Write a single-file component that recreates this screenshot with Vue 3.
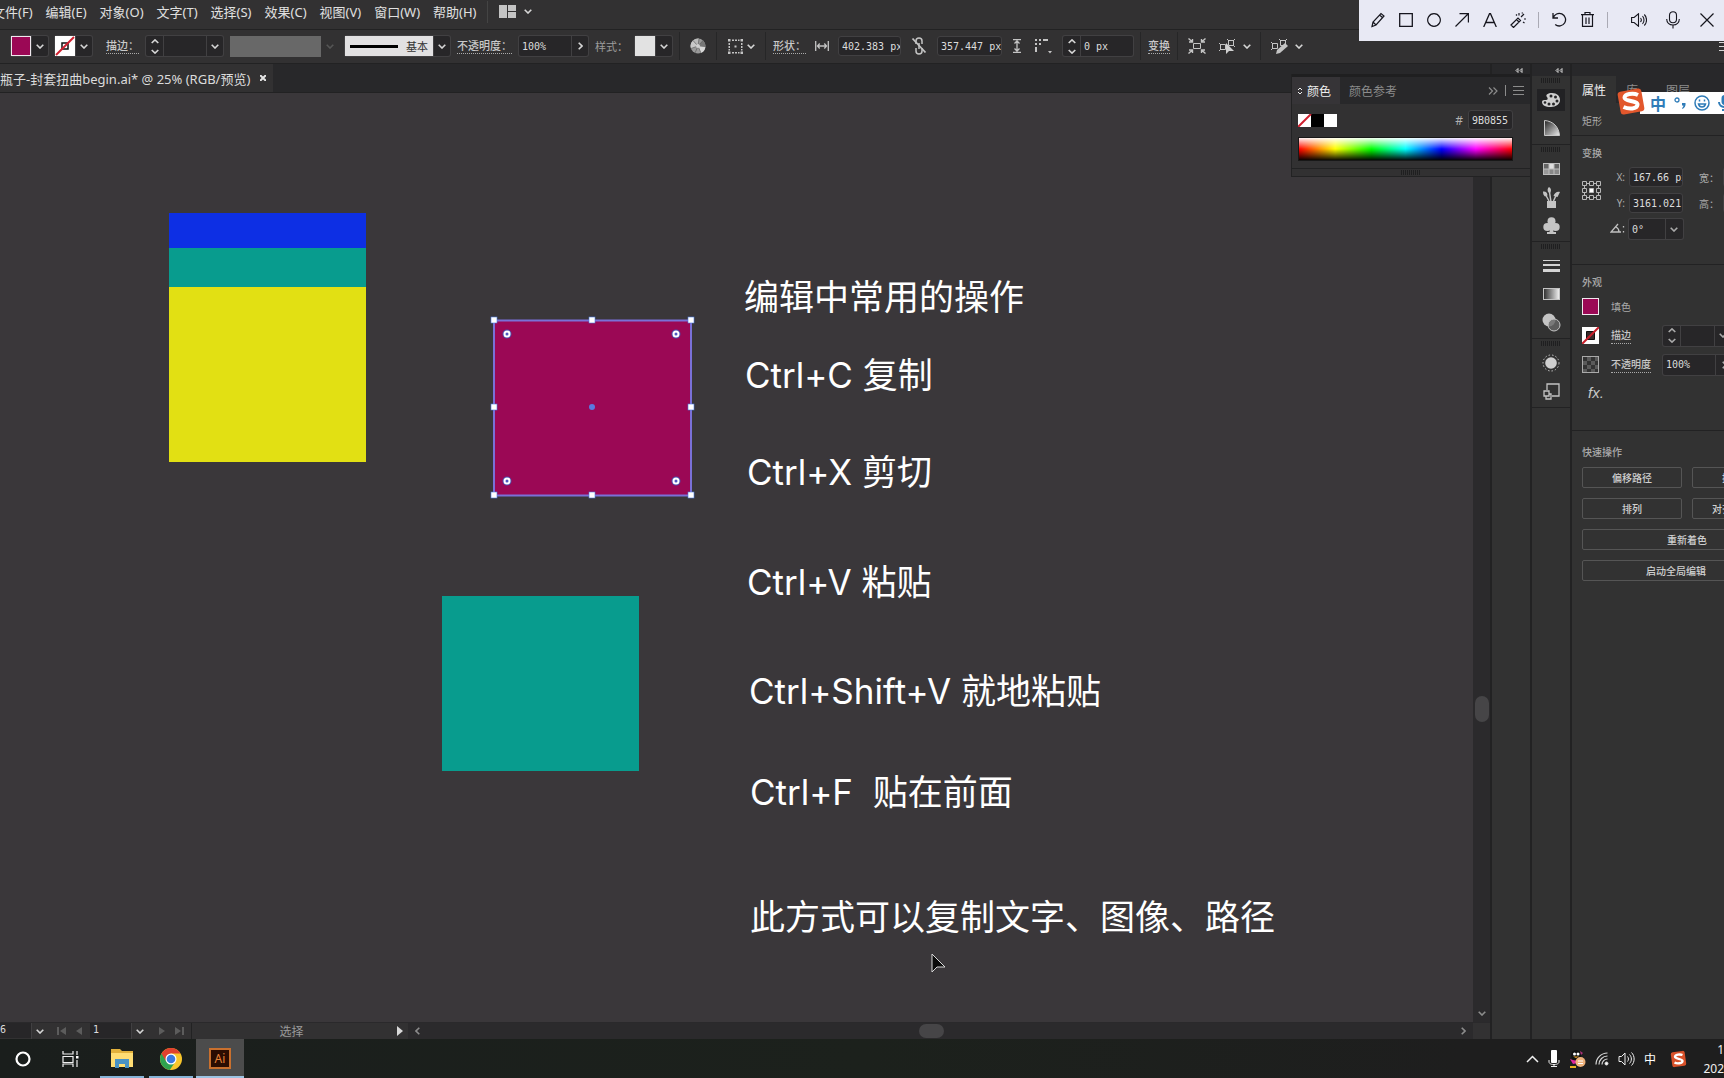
<template>
  <div class="app">
    <!-- Menu bar -->
    <header class="menu-bar">
      <nav class="menus">
        <button v-for="menu in menus" :key="menu" class="menu">{{ menu }}</button>
      </nav>
      <span class="menu-sep"></span>
      <button class="layout-btn" aria-label="排列文档">
        <svg width="17" height="13" viewBox="0 0 17 13" fill="#c4c4c4">
          <path d="M0 0h8v13H0zM9 0h8v6H9zM9 7h8v6H9z" />
        </svg>
        <Glyph name="down" />
      </button>
    </header>

    <!-- Control bar -->
    <section class="control-bar">
      <div class="combo">
        <span class="swatch fill"></span>
        <button class="arrow" aria-label="填色"><Glyph name="down" /></button>
      </div>
      <div class="combo">
        <svg class="swatch" width="20" height="20" viewBox="0 0 20 20">
          <path fill="#fff" d="M0 0h20v20H0z" />
          <path d="M7 7h6v6H7z" fill="none" stroke="#111" stroke-width="1.5" />
          <path d="M1 19L19 1" stroke="#d02030" stroke-width="2" />
        </svg>
        <button class="arrow" aria-label="描边颜色"><Glyph name="down" /></button>
      </div>
      <label class="link more" for="stroke-w">描边：</label>
      <div class="combo">
        <button class="spin" aria-label="调整描边"><Glyph name="spin" /></button>
        <input id="stroke-w" v-model="strokeWidth" class="w42" />
        <button class="arrow" aria-label="描边粗细"><Glyph name="down" /></button>
      </div>
      <div class="combo off">
        <span class="width-profile"></span>
        <button class="arrow" aria-label="变量宽度" disabled><Glyph name="down" /></button>
      </div>
      <div class="combo">
        <span class="brush"><i></i>基本</span>
        <button class="arrow" aria-label="画笔"><Glyph name="down" /></button>
      </div>
      <label class="link" for="opacity">不透明度：</label>
      <div class="combo">
        <input id="opacity" v-model="opacity" class="w52" />
        <button class="arrow" aria-label="不透明度滑块"><Glyph name="right" /></button>
      </div>
      <span class="plain">样式：</span>
      <div class="combo">
        <span class="swatch style"></span>
        <button class="arrow" aria-label="图形样式"><Glyph name="down" /></button>
      </div>
      <span class="sep"></span>
      <button class="cell c22" aria-label="重新着色图稿">
        <svg width="16" height="16" viewBox="0 0 16 16">
          <circle cx="8" cy="8" r="7.500" fill="#9a9a9a" />
          <path d="M8 8L3 2.500A7.500 7.500 0 0 1 9 .6z" fill="#bcbcbc" />
          <path d="M8 8l7.400 1A7.500 7.500 0 0 1 11 15z" fill="#d8d8d8" />
          <path d="M8 8L1 10.500A7.500 7.500 0 0 1 3 2.500z" fill="#c8c8c8" />
          <path d="M8 8l5-5.500a7.500 7.500 0 0 1 2.400 6.500z" fill="#777" />
          <path d="M8 8L5 15M8 8l3 7M8 8L1 10.500M8 8L3 2.500M8 8l1-7.400M8 8l5-5.500" stroke="#555" stroke-width=".6" />
          <circle cx="8" cy="8" r="2" fill="#d0d0d0" />
        </svg>
      </button>
      <span class="sep"></span>
      <button class="cell c34" aria-label="对齐">
        <svg width="15" height="15" viewBox="0 0 15 15" fill="#c4c4c4">
          <path d="M0 0h2.500v2.500H0zM12.500 0H15v2.500h-2.500zM0 12.500h2.500V15H0zM12.500 12.500H15V15h-2.500zM6.500 6.500h2v2h-2z" />
          <path d="M4 .5h2v1.500H4zM7 .5h2v1.500H7zM10 .5h1.500v1.500H10zM4 13h2v1.500H4zM7 13h2v1.500H7zM10 13h1.500v1.500H10zM.5 4H2v2H.5zM.5 7H2v2H.5zM.5 10H2v1.500H.5zM13 4h1.500v2H13zM13 7h1.500v2H13zM13 10h1.500v1.500H13z" />
        </svg>
        <Glyph name="down" />
      </button>
      <span class="sep"></span>
      <label class="link" for="shape-w">形状：</label>
      <span class="cell c18">
        <svg width="14" height="10" viewBox="0 0 14 10" fill="none" stroke="#c4c4c4" stroke-width="1.300">
          <path d="M.7 0v10M13.300 0v10M2.500 5h9M4.700 2.500L2.500 5l2.200 2.500M9.300 2.500L11.500 5 9.300 7.500" />
        </svg>
      </span>
      <input id="shape-w" v-model="shapeW" class="box w63" />
      <button class="cell c22" aria-label="约束宽度和高度比例">
        <svg width="16" height="18" viewBox="0 0 16 18" fill="none" stroke="#c4c4c4" stroke-width="1.500">
          <path d="M5 7V4a3 3 0 0 1 6 0v3M5 11v3a3 3 0 0 0 6 0v-3M8 6v6" />
          <path d="M1.500 1.500l13 14" stroke-width="1.800" />
        </svg>
      </button>
      <input v-model="shapeH" class="box w65" aria-label="形状高度" />
      <span class="cell c15">
        <svg width="10" height="14" viewBox="0 0 10 14" fill="none" stroke="#c4c4c4">
          <path d="M1 .5h8M1 13.500h8M5 2v10M2.500 4.500L5 2l2.500 2.500M2.500 9.500L5 12l2.500-2.500" stroke-width="1.300" />
        </svg>
      </span>
      <button class="cell c25" aria-label="边角类型">
        <svg width="17" height="15" viewBox="0 0 17 15" fill="#c4c4c4">
          <path d="M0 0h2v2H0zM4 0h2v2H4zM8 0h5v2H8zM0 4h2v2H0zM4 4h2v2H4zM0 8h2v5H0zM13 12h4l-2 2.500z" />
        </svg>
      </button>
      <div class="combo">
        <button class="spin" aria-label="调整圆角"><Glyph name="spin" /></button>
        <input v-model="radius" class="w52" aria-label="圆角半径" />
      </div>
      <span class="sep"></span>
      <a class="link" href="#">变换</a>
      <span class="sep"></span>
      <button class="cell c24" aria-label="隔离选中的对象">
        <svg width="18" height="16" viewBox="0 0 18 16" fill="none" stroke="#c4c4c4">
          <path d="M5.500 5.500h7v5h-7z" />
          <path d="M.5.5l4 3.500M4.500 1v3H1M17.500.5l-4 3.500M13.500 1v3H17M.5 15.500l4-3.500M4.500 15v-3H1M17.500 15.500l-4-3.500M13.500 15v-3H17" stroke-width="1.400" />
        </svg>
      </button>
      <button class="cell c37" aria-label="选择类似的对象">
        <svg width="18" height="17" viewBox="0 0 18 17">
          <path d="M1.500 6.500h5v5h-5zM9.500 2.500h5v5h-5zM0 5l2 2M0 13l2-2M8 1l2 2M16 1l-2 2M16 9l-2-2" fill="none" stroke="#c4c4c4" />
          <path d="M7 5v11l3-3h5z" fill="#d0d0d0" />
        </svg>
        <Glyph name="down" />
      </button>
      <span class="sep"></span>
      <button class="cell c37" aria-label="编辑类似的形状">
        <svg width="18" height="17" viewBox="0 0 18 17">
          <path d="M1.500 5.500h5v5h-5zM9.500 2.500h5v5h-5zM0 4l2 2M0 12l2-2M8 1l2 2M16 1l-2 2" fill="none" stroke="#c4c4c4" />
          <path d="M5 16l1-4 8-7 3 3-8 7z" fill="#c4c4c4" />
        </svg>
        <Glyph name="down" />
      </button>
      <button class="bar-menu" aria-label="控制栏菜单"><Glyph name="menu" /></button>
    </section>

    <main class="workspace">
      <!-- Document -->
      <section class="doc">
        <div class="doc-tabs">
          <div class="doc-tab">
            <span>瓶子-封套扭曲begin.ai* @ 25% (RGB/预览)</span>
            <button aria-label="关闭"><svg width="6" height="6" viewBox="0 0 6 6" stroke="#e4e4e4" stroke-width="2"><path d="M0 0l6 6M6 0L0 6" /></svg></button>
          </div>
        </div>
        <div class="doc-view">
          <div class="canvas">
            <div v-for="(s, i) in shapes" :key="i" class="shape" :style="box(s)"></div>
            <svg class="selection" width="206" height="184" viewBox="0 0 206 184">
              <path d="M5 4.500h197v175H5z" fill="#9b0855" stroke="#7a70d8" stroke-width="2" />
              <g fill="#fff" stroke="#4c7ce0">
                <rect v-for="(p, i) in handles" :key="i" :x="p[0] - 3" :y="p[1] - 3" width="6" height="6" stroke-width=".6" />
              </g>
              <g v-for="(c, i) in corners" :key="'c' + i">
                <circle :cx="c[0]" :cy="c[1]" r="3" fill="#9b0855" stroke="#4a4fae" stroke-width="3" />
                <circle :cx="c[0]" :cy="c[1]" r="2.500" fill="#4b58c0" stroke="#fff" stroke-width="2" />
              </g>
              <circle cx="103" cy="91" r="3" fill="#5a78e0" />
            </svg>
            <p v-for="n in notes" :key="n.text" class="note" :style="{ left: n.x + 'px', top: n.y + 'px' }">{{ n.text }}</p>
            <svg class="cursor" width="15" height="21" viewBox="0 0 15 21">
              <path d="M1 1v18l5-5h8z" fill="#0a0a0a" stroke="#d8d8d8" />
            </svg>
          </div>
          <div class="v-scroll">
            <span class="v-thumb"></span>
            <Glyph name="down" />
          </div>
        </div>
        <footer class="status">
          <div class="zoom">
            <input v-model="zoomText" aria-label="缩放" />
            <button class="arrow" aria-label="缩放级别"><Glyph name="down" /></button>
          </div>
          <button class="nav" aria-label="首项"><svg width="10" height="8" viewBox="0 0 10 8" fill="#5c5c5c"><path d="M0 0h2v8H0zM9 0v8L3 4z" /></svg></button>
          <button class="nav" aria-label="上一项"><svg width="6" height="8" viewBox="0 0 6 8" fill="#5c5c5c"><path d="M6 0v8L0 4z" /></svg></button>
          <div class="artboard">
            <input v-model="artboard" aria-label="画板" />
            <button class="arrow" aria-label="画板列表"><Glyph name="down" /></button>
          </div>
          <button class="nav" aria-label="下一项"><svg width="6" height="8" viewBox="0 0 6 8" fill="#5c5c5c"><path d="M0 0v8l6-4z" /></svg></button>
          <button class="nav" aria-label="末项"><svg width="10" height="8" viewBox="0 0 10 8" fill="#5c5c5c"><path d="M8 0h2v8H8zM1 0v8l6-4z" /></svg></button>
          <span class="tool-name">选择</span>
          <button class="play" aria-label="状态栏菜单"><svg width="6" height="10" viewBox="0 0 6 10" fill="#d8d8d8"><path d="M0 0v10l6-5z" /></svg></button>
          <div class="h-scroll">
            <Glyph name="left" />
            <span class="h-thumb"></span>
            <Glyph name="right" />
          </div>
          <span class="corner"></span>
        </footer>
      </section>

      <section class="column gutter">
        <div class="column-top"><Glyph name="collapse" /></div>
      </section>

      <!-- Icon dock -->
      <section class="column dock">
        <div class="column-top"><Glyph name="collapse" /></div>
        <div class="dock-group">
          <span class="grip"></span>
          <button class="active" aria-label="颜色">
            <svg width="20" height="16" viewBox="0 0 20 16">
              <path d="M11 1c5 0 8 3 8 7s-4 7-9 7c-6 0-9-2-9-5 0-2 2-2 4-2s2-2 1-3c-2-2 1-4 5-4z" fill="#d0d0d0" />
              <g fill="#262628"><circle cx="10" cy="4" r="1.500" /><circle cx="14.500" cy="5" r="1.500" /><circle cx="16" cy="9" r="1.500" /><circle cx="12.500" cy="12" r="1.500" /><circle cx="8" cy="12" r="1.500" /><circle cx="4" cy="10.500" r="1.300" /></g>
            </svg>
          </button>
          <button aria-label="颜色参考">
            <svg width="17" height="16" viewBox="0 0 17 16">
              <defs><linearGradient id="guide" x2="1" y2="1"><stop stop-color="#222" /><stop offset="1" stop-color="#eee" /></linearGradient></defs>
              <path d="M1.500.5v15h15C16 7 10 1 1.500.5z" fill="url(#guide)" stroke="#c8c8c8" />
            </svg>
          </button>
        </div>
        <div class="dock-group">
          <span class="grip"></span>
          <button aria-label="色板">
            <svg width="17" height="12" viewBox="0 0 17 12">
              <path d="M0 0h17v12H0z" fill="#bdbdbd" />
              <path d="M1 1h4.500v4.500H1zM11.500 1H16v4.500h-4.500z" fill="#666" /><path d="M6.500 1h4v4.500h-4z" fill="#e0e0e0" /><path d="M1 6.500h4.500V11H1z" fill="#999" /><path d="M6.500 6.500h4V11h-4zM11.500 6.500H16V11h-4.500z" fill="#888" />
            </svg>
          </button>
          <button aria-label="画笔">
            <svg width="17" height="21" viewBox="0 0 17 21" fill="#c4c4c4">
              <path d="M4 14h9v7H4zM6 0c2 1 2.500 3 1.500 5.500h-2C4 4 4.500 1 6 0zM0 4.500c2.500-.5 4.500 1 4.500 4L2 9.500C.5 8.500 0 6.500 0 4.500zM17 5c-3-1-5.500 1-6.500 4l4 1z" />
              <path d="M6.500 5l1.500 10M3 8.500l3 5.500M13 8.500L10.500 14" stroke="#c4c4c4" stroke-width="1.500" fill="none" />
            </svg>
          </button>
          <button aria-label="符号">
            <svg width="17" height="17" viewBox="0 0 17 17" fill="#c4c4c4">
              <circle cx="8.500" cy="4.300" r="4" /><circle cx="4.300" cy="10" r="4" /><circle cx="12.700" cy="10" r="4" /><path d="M7.500 8h2l1 7H13v2H4v-2h2.500z" />
            </svg>
          </button>
        </div>
        <div class="dock-group">
          <span class="grip"></span>
          <button aria-label="描边">
            <svg width="17" height="13" viewBox="0 0 17 13" fill="#d4d4d4"><path d="M0 0h17v1H0zM0 4h17v2H0zM0 9h17v3H0z" /></svg>
          </button>
          <button aria-label="渐变"><span class="gradient-icon"></span></button>
          <button aria-label="透明度">
            <svg width="19" height="19" viewBox="0 0 19 19">
              <circle cx="7" cy="7" r="6.500" fill="#c4c4c4" /><circle cx="12" cy="12" r="6" fill="#666" fill-opacity=".8" stroke="#c4c4c4" />
            </svg>
          </button>
        </div>
        <div class="dock-group">
          <span class="grip"></span>
          <button aria-label="外观">
            <svg width="18" height="18" viewBox="0 0 18 18">
              <circle cx="9" cy="9" r="5.800" fill="#d0d0d0" /><circle cx="9" cy="9" r="8" fill="none" stroke="#c4c4c4" stroke-dasharray="1.500 2" />
            </svg>
          </button>
          <button aria-label="图形样式">
            <svg width="17" height="17" viewBox="0 0 17 17" fill="none" stroke="#c4c4c4" stroke-width="1.300">
              <path d="M4 7V1h12v12H9M1 8h5v5H1zM3 13v3h5v-5H6" />
            </svg>
          </button>
        </div>
      </section>

      <!-- Properties -->
      <aside class="column props">
        <div class="column-top"></div>
        <div class="prop-tabs">
          <button class="on">属性</button>
          <button>库</button>
          <button>图层</button>
        </div>
        <div class="prop-type">矩形</div>
        <section class="transform">
          <h3>变换</h3>
          <div class="transform-grid">
            <svg class="ref-point" width="19" height="19" viewBox="0 0 19 19" fill="none" stroke="#b8b8b8">
              <path d="M.5.5h4v4h-4zM7.500.5h4v4h-4zM14.500.5h4v4h-4zM.5 7.500h4v4h-4zM14.500 7.500h4v4h-4zM.5 14.500h4v4h-4zM7.500 14.500h4v4h-4zM14.500 14.500h4v4h-4zM5 2.500h2M12 2.500h2M5 16.500h2M12 16.500h2M2.500 5v2M2.500 12v2M16.500 5v2M16.500 12v2" />
              <path d="M7.500 7.500h4v4h-4z" fill="#fff" />
            </svg>
            <div class="coords">
              <label for="px">X:</label><input id="px" v-model="posX" class="box" />
              <label for="pw">宽：</label><input id="pw" v-model="shapeW" class="box" />
              <label for="py">Y:</label><input id="py" v-model="posY" class="box" />
              <label for="ph">高：</label><input id="ph" v-model="shapeH" class="box" />
              <label for="pa" aria-label="旋转">
                <svg width="15" height="10" viewBox="0 0 15 10" fill="none" stroke="#c0c0c0"><path d="M11 9H1l7-8M6 4c2 1 3 3 3 5M13.500 3v1.500M13.500 8v1.500" stroke-width="1.300" /></svg>
              </label>
              <div class="combo">
                <input id="pa" v-model="angle" class="w36" />
                <button class="arrow" aria-label="旋转角度"><Glyph name="down" /></button>
              </div>
            </div>
          </div>
        </section>
        <section class="appearance">
          <h3>外观</h3>
          <div class="look-rows">
            <div class="look-row">
              <span class="chip fill"></span><span>填色</span>
            </div>
            <div class="look-row">
              <svg width="17" height="17" viewBox="0 0 17 17">
                <path fill="#fff" d="M0 0h17v17H0z" /><path d="M4.500 4.500h8v8h-8z" fill="#3a2a2a" stroke="#111" /><path d="M0 17L17 0" stroke="#c8202c" stroke-width="2" />
              </svg>
              <label class="link" for="st">描边</label>
              <div class="combo">
                <button class="spin" aria-label="调整描边粗细"><Glyph name="spin" /></button>
                <input id="st" v-model="strokeWidth" class="w33" />
                <button class="arrow" aria-label="粗细"><Glyph name="down" /></button>
              </div>
            </div>
            <div class="look-row">
              <span class="chip checker"></span>
              <label class="link" for="op">不透明度</label>
              <div class="combo">
                <input id="op" v-model="opacity" class="w52" />
                <button class="arrow" aria-label="滑块"><Glyph name="right" /></button>
              </div>
            </div>
          </div>
          <button class="fx">fx.</button>
        </section>
        <section class="quick">
          <h3>快速操作</h3>
          <div class="quick-grid">
            <button>偏移路径</button>
            <button>扩展形状</button>
            <button>排列</button>
            <button>对齐像素网格</button>
            <button class="wide">重新着色</button>
            <button class="wide split">启动全局编辑</button>
          </div>
        </section>
      </aside>

      <!-- Floating color panel -->
      <section class="color-panel">
        <div class="color-tabs">
          <button class="on"><Glyph name="updown" />颜色</button>
          <button>颜色参考</button>
          <span class="color-tools"><Glyph name="expand" /><i></i><Glyph name="menu" /></span>
        </div>
        <div class="color-row">
          <svg width="39" height="13" viewBox="0 0 39 13"><path d="M0 0h13v13H0zM26 0h13v13H26z" fill="#fff" /><path d="M13 0h13v13H13z" fill="#000" /><path d="M0 13L13 0" stroke="#d02030" stroke-width="2" /></svg>
          <label for="hex">#</label>
          <input id="hex" v-model="hex" class="box" />
        </div>
        <div class="spectrum"></div>
        <div class="panel-foot"><span class="grip"></span></div>
      </section>
    </main>

    <!-- Taskbar -->
    <footer class="taskbar">
      <button class="task first" aria-label="Cortana"><svg width="16" height="16" viewBox="0 0 16 16"><circle cx="8" cy="8" r="6.500" fill="none" stroke="#fff" stroke-width="2.200" /></svg></button>
      <button class="task" aria-label="任务视图">
        <svg width="17" height="16" viewBox="0 0 17 16" fill="none" stroke="#f0f0f0" stroke-width="1.200"><path d="M1 0v3h10V0M1 5.500h10v6H1zM1 16v-3h10v3M15 0v4M15 9v7" /><path d="M14 5h2.500v2.500H14z" fill="#fff" stroke="none" /></svg>
      </button>
      <div class="running">
        <button class="task open" aria-label="文件资源管理器">
          <svg width="22" height="19" viewBox="0 0 22 19"><path d="M0 0h9l2 2h11v16H0z" fill="#e2b13c" /><path d="M0 4h22v14H0z" fill="#ffdd73" /><path d="M4 10h14v9h-4v-4H8v4H4z" fill="#4a93c4" /></svg>
        </button>
        <button class="task open" aria-label="Chrome">
          <svg width="22" height="22" viewBox="0 0 22 22">
            <circle cx="11" cy="11" r="11" fill="#f8c62c" />
            <path d="M1.500 5.500a11 11 0 0 0 8.300 16.400L15.500 13.500 11 11z" fill="#2fa24f" />
            <path d="M11 5.500h9.500a11 11 0 0 0-19 0l4.700 8z" fill="#e0402f" />
            <circle cx="11" cy="11" r="5.500" fill="#fff" /><circle cx="11" cy="11" r="4.300" fill="#3b78e0" />
          </svg>
        </button>
        <button class="task open current"><span class="ai">Ai</span></button>
      </div>
      <div class="tray">
        <svg width="13" height="8" viewBox="0 0 13 8" fill="none" stroke="#f0f0f0" stroke-width="1.500"><path d="M1 7l5.500-5.500L12 7" /></svg>
        <svg width="12" height="17" viewBox="0 0 12 17"><rect x="3" width="6" height="13" rx="1" fill="#fff" /><path d="M1 10v2c0 1 1 2.500 5 2.500s5-1.500 5-2.500v-2M6 14v2.500M3 16.500h6" fill="none" stroke="#eee" /></svg>
        <svg width="17" height="18" viewBox="0 0 17 18">
          <ellipse cx="7" cy="5.500" rx="5" ry="5.500" fill="#111" /><circle cx="5.500" cy="4" r="1.500" fill="#fff" /><circle cx="9" cy="4" r="1.500" fill="#fff" />
          <path d="M1 9c4 2 8 2 11-1l1 4-9 2z" fill="#e0259c" /><path d="M11 1l3 2-2 2z" fill="#b0307c" />
          <circle cx="11.500" cy="12" r="5" fill="#efb27c" /><path d="M9 11h5M9 13.500h5" stroke="#fff" /><path d="M1 16h6v2H1z" fill="#e8b020" /><path d="M4 6.500h6l-3 1.500z" fill="#e8a020" />
        </svg>
        <svg width="14" height="14" viewBox="0 0 14 14" fill="none" stroke="#d8d8d8"><path d="M1 12.500A11.500 11.500 0 0 1 12.500 1M4 12.500A8.500 8.500 0 0 1 12.500 4M7 12.500A5.500 5.500 0 0 1 12.500 7" stroke-width="1.200" /><circle cx="11.500" cy="11.500" r="1.500" fill="#fff" /></svg>
        <svg width="17" height="14" viewBox="0 0 17 14" fill="none" stroke="#f0f0f0"><path d="M1 4.500h2.500L7 1v12L3.500 9.500H1zM9.500 4.500c1.300 1.500 1.300 3.500 0 5M11.500 2.500c2.500 2.500 2.500 6.500 0 9M13.500.5c3.500 3.500 3.500 9.500 0 13" /></svg>
        <span class="ime">中</span>
        <svg width="17" height="18" viewBox="0 0 17 18"><rect x="1.500" y="1.500" width="14" height="15" rx="2" fill="#d8512a" transform="rotate(-8 8.500 9)" /><path d="M12.500 5C10 4 5 4.500 5 6.800S12.500 8.500 12.500 11 7 14 4.500 12.500" fill="none" stroke="#fff" stroke-width="2.400" /></svg>
      </div>
      <div class="clock"><span>1</span><span>202</span></div>
    </footer>

    <!-- Annotation toolbar -->
    <div class="annotate">
      <button v-for="t in markTools" :key="t" :aria-label="t"><Glyph :name="t" /></button>
      <span class="rule"></span>
      <button v-for="t in editTools" :key="t" :aria-label="t"><Glyph :name="t" /></button>
      <div class="annotate-end">
        <button v-for="t in mediaTools" :key="t" :aria-label="t"><Glyph :name="t" /></button>
      </div>
    </div>

    <!-- IME bar -->
    <div class="sogou">
      <svg class="sogou-logo" width="30" height="29" viewBox="0 0 30 29">
        <rect x="3" y="3" width="24" height="23" rx="3" fill="#e2572c" transform="rotate(-10 15 14.500)" />
        <path d="M22 8C17 5.500 8.500 7 8.500 10.800S22 13.500 21.500 17.800 13 22.500 7.500 20" fill="none" stroke="#fff" stroke-width="4" />
      </svg>
      <button class="zh">中</button>
      <svg width="12" height="14" viewBox="0 0 12 14"><circle cx="3" cy="4" r="2" fill="none" stroke="#2f7cb8" stroke-width="1.300" /><path d="M8 7h3.500c.5 3-1 5-3 6l-.5-1c1-.7 1.500-1.500 1.300-2.500H8z" fill="#2f7cb8" /></svg>
      <svg width="16" height="16" viewBox="0 0 16 16" fill="none" stroke="#2f7cb8" stroke-width="1.500"><circle cx="8" cy="8" r="7" /><path d="M4.500 9c1 4 6 4 7 0zM5.500 4.500v2M10.500 4.500v2" /></svg>
      <svg width="14" height="16" viewBox="0 0 14 16" fill="none" stroke="#2f7cb8" stroke-width="2"><rect x="4.500" y="1" width="5" height="8" rx="2.500" fill="#2f7cb8" /><path d="M1 7c0 3 2.500 5 6 5s6-2 6-5M7 12v3M4 15h6" /></svg>
    </div>
  </div>
</template>

<script setup>
import { ref, h } from 'vue'

// [width, height, path, stroke width]
const glyphs = {
  down: [8, 5, 'M.7.7L4 4 7.300.7', 1.6],
  right: [5, 8, 'M.7.7L4 4 .7 7.300', 1.6],
  left: [5, 8, 'M4.300.7L1 4l3.300 3.300', 1.6],
  spin: [8, 15, 'M.7 4L4 .9 7.300 4M.7 11L4 14.100 7.300 11', 1.6],
  updown: [6, 8, 'M1 3l2-2 2 2M1 5l2 2 2-2', 1],
  expand: [10, 8, 'M1 .5L4.500 4 1 7.500M5.500.5L9 4 5.500 7.500', 1.2],
  collapse: [8, 5, 'M3 .5L1 2.500l2 2zM7 .5l-2 2 2 2z', 1],
  menu: [11, 9, 'M0 .5h11M0 4.500h11M0 8.500h11', 1],
  pencil: [14, 16, 'M1 14.500l1-4.500L10 1.500l3 2.500-8 9zM2 10l3 3M8.500 3l3 2.500', 1.2],
  square: [14, 14, 'M.7.7h12.600v12.600H.7z', 1.3],
  circle: [14, 14, 'M7 .7a6.300 6.300 0 1 0 .01 0z', 1.2],
  arrow: [14, 14, 'M.5 13.500l13-13M4.500.6h8.900v8.900', 1.2],
  text: [14, 14, 'M.7 14L6.500.7h1L13.300 14M3 9.500h8', 1.3],
  wand: [16, 16, 'M1 13l7-7 2.500 2.500-7 7zM6.500 7.500L9 10M9 1v2.500M14 7h2M11 5l3-3M13 10l1.500 1M6 2.500l1 1M12 .5l.5 1', 1.2],
  undo: [15, 15, 'M1 1v5h5M1.200 6a6.300 6.300 0 1 1 2 6.500', 1.3],
  trash: [13, 15, 'M0 2.700h13M4 2.500v-2h5v2M1.500 3v11.300h10V3M5 5.500v6.500M8 5.500v6.500', 1.2],
  sound: [16, 14, 'M.6 4.500h2.500L7.500.8v12.400L3.100 9.500H.6zM9.500 5c1 1.200 1 2.800 0 4M11.500 3.200c2 2 2 5.600 0 7.600M13.300 1.500c3 3 3 8 0 11', 1.1],
  mic: [14, 18, 'M7 .7a3.500 3.500 0 0 0-3.500 3.500v4a3.500 3.500 0 0 0 7 0v-4A3.500 3.500 0 0 0 7 .7zM.7 8c0 3.500 2.500 6 6.300 6s6.300-2.500 6.300-6M7 14v3.500', 1.1],
  close: [14, 14, 'M.5.5l13 13M13.500.5l-13 13', 1.2],
}

const Glyph = ({ name }) => {
  const [w, ht, d, sw] = glyphs[name]
  return h('svg', { width: w, height: ht, viewBox: `0 0 ${w} ${ht}`, fill: 'none', stroke: 'currentColor', 'stroke-width': sw }, [h('path', { d })])
}

const menus = ['文件(F)', '编辑(E)', '对象(O)', '文字(T)', '选择(S)', '效果(C)', '视图(V)', '窗口(W)', '帮助(H)']
const markTools = ['pencil', 'square', 'circle', 'arrow', 'text', 'wand']
const editTools = ['undo', 'trash']
const mediaTools = ['sound', 'mic', 'close']

const strokeWidth = ref('')
const opacity = ref('100%')
const shapeW = ref('402.383 px')
const shapeH = ref('357.447 px')
const radius = ref('0 px')
const posX = ref('167.66 px')
const posY = ref('3161.021 px')
const angle = ref('0°')
const hex = ref('9B0855')
const zoomText = ref('6')
const artboard = ref('1')

// artwork, in canvas coordinates
const shapes = [
  { x: 169, y: 120, w: 197, h: 35, color: '#0d2fe4' },
  { x: 169, y: 155, w: 197, h: 39, color: '#089c8e' },
  { x: 169, y: 194, w: 197, h: 175, color: '#e2e013' },
  { x: 442, y: 503, w: 197, h: 175, color: '#089c8e' },
]
const box = (s) => ({
  left: s.x + 'px',
  top: s.y + 'px',
  width: s.w + 'px',
  height: s.h + 'px',
  background: s.color,
})

const handles = [[5, 4], [103, 4], [202, 4], [5, 91], [202, 91], [5, 179], [103, 179], [202, 179]]
const corners = [[18, 18], [187, 18], [18, 165], [187, 165]]

const notes = [
  { x: 744, y: 179, text: '编辑中常用的操作' },
  { x: 745, y: 257, text: 'Ctrl+C 复制' },
  { x: 747, y: 354, text: 'Ctrl+X 剪切' },
  { x: 747, y: 464, text: 'Ctrl+V 粘贴' },
  { x: 749, y: 573, text: 'Ctrl+Shift+V 就地粘贴' },
  { x: 750, y: 674, text: 'Ctrl+F  贴在前面' },
  { x: 750, y: 799, text: '此方式可以复制文字、图像、路径' },
]
</script>

<style>
body {
  overflow: hidden;
  background: #323232;
}
</style>

<style scoped>
.app {
  --bar: #323132;
  --dark: #28282a;
  --field: #272628;
  --line: #222223;
  --edge: #414042;
  position: relative;
  display: flex;
  flex-direction: column;
  height: 100vh;
  overflow: hidden;
  background: #323232;
  color: #d6d6d6;
  font-family: "Noto Sans", "Noto Sans CJK SC", sans-serif;
  font-size: 12px;
}

.app * {
  box-sizing: border-box;
}

button {
  display: flex;
  align-items: center;
  justify-content: center;
  padding: 0;
  border: 0;
  background: none;
  color: inherit;
  font: inherit;
  flex-shrink: 0;
}

input {
  height: 20px;
  min-width: 0;
  padding: 0 0 0 3px;
  border: 0;
  border-radius: 0;
  outline: 0;
  background: transparent;
  color: #dcdcdc;
  font: 10px/18px "DejaVu Sans Mono", monospace;
}

svg {
  flex-shrink: 0;
}

h3 {
  margin: 0;
  font-size: 10px;
  font-weight: 500;
  line-height: 14px;
  color: #aaa;
}

/* menu bar */
.menu-bar {
  display: flex;
  align-items: center;
  height: 30px;
  flex-shrink: 0;
  padding-bottom: 6px;
  border-bottom: 1px solid var(--line);
  background: var(--bar);
}

.menus {
  display: flex;
  gap: 13px;
  margin-left: -8px;
}

.menu {
  font-size: 13px;
  line-height: 20px;
  color: #e0e0e0;
}

.menu-sep {
  width: 1px;
  height: 22px;
  margin: 0 11px;
  background: #444;
}

.layout-btn {
  gap: 8px;
}

/* control bar */
.control-bar {
  position: relative;
  display: flex;
  align-items: center;
  gap: 7px;
  height: 34px;
  flex-shrink: 0;
  padding: 0 0 1px 11px;
  border-bottom: 1px solid var(--line);
  background: var(--bar);
  font-size: 11px;
  white-space: nowrap;
}

.control-bar > * {
  flex-shrink: 0;
}

.combo {
  display: flex;
  align-items: center;
  height: 20px;
  border-radius: 2px;
  background: var(--field);
  box-shadow: 0 0 0 1px var(--edge);
}

.combo.off {
  background: none;
  box-shadow: none;
  color: #555;
}

.arrow {
  width: 17px;
  height: 20px;
  border-left: 1px solid var(--edge);
}

.off .arrow {
  border: 0;
}

.spin {
  width: 18px;
  height: 20px;
  border-right: 1px solid var(--edge);
}

.swatch {
  width: 20px;
  height: 20px;
  flex-shrink: 0;
}

.fill {
  border: 1px solid #f0e8ee;
  background: #9b0855;
}

.style {
  background: #e2e2e2;
}

.more {
  margin-left: 7px;
}

.link {
  color: #c8c8c8;
  font-weight: 500;
  line-height: 15px;
  text-decoration: none;
  border-bottom: 1px dotted #aaa;
}

.plain {
  color: #9c9c9c;
}

.w33 { width: 33px; }
.w36 { width: 36px; }
.w42 { width: 42px; }
.w52 { width: 52px; }
.w63 { width: 63px; }
.w65 { width: 65px; }
.c15 { width: 15px; }
.c18 { width: 18px; }
.c22 { width: 22px; }
.c24 { width: 24px; }
.c25 { width: 25px; }
.c34 { width: 34px; }
.c37 { width: 37px; }

.box {
  border: 1px solid var(--edge);
  border-radius: 3px;
  background: var(--field);
}

.width-profile {
  width: 91px;
  height: 21px;
  background: #686868;
}

.brush {
  display: flex;
  align-items: center;
  justify-content: space-between;
  width: 88px;
  height: 20px;
  padding: 0 5px;
  background: #e2e1e2;
  color: #333;
}

.brush i {
  width: 48px;
  height: 3px;
  background: #000;
}

.sep {
  width: 1px;
  height: 28px;
  background: #262627;
}

.cell {
  display: flex;
  align-items: center;
  justify-content: center;
  gap: 4px;
}

.c37 {
  justify-content: flex-start;
  gap: 6px;
  padding-left: 3px;
}

.bar-menu {
  position: absolute;
  right: -6px;
}

/* workspace */
.workspace {
  position: relative;
  display: flex;
  flex: 1;
  min-height: 0;
}

.doc {
  display: flex;
  flex-direction: column;
  flex: 1;
  min-width: 0;
}

.doc-tabs {
  height: 29px;
  flex-shrink: 0;
  border-bottom: 1px solid var(--line);
  background: var(--dark);
}

.doc-tab {
  display: flex;
  align-items: center;
  justify-content: space-between;
  width: 273px;
  height: 28px;
  padding-right: 7px;
  background: var(--bar);
  color: #dcdcdc;
  font-size: 13px;
  white-space: nowrap;
}

.doc-tab button {
  width: 6px;
}

.doc-view {
  display: flex;
  flex: 1;
  min-height: 0;
}

.canvas {
  position: relative;
  flex: 1;
  overflow: hidden;
  background: #3a373a;
}

.shape,
.selection,
.note,
.cursor {
  position: absolute;
}

.selection {
  left: 489px;
  top: 223px;
}

.note {
  margin: 0;
  color: #fff;
  font-family: Inter, "Noto Sans CJK SC", sans-serif;
  font-size: 35px;
  font-weight: 400;
  line-height: 50px;
  white-space: pre;
}

.cursor {
  left: 931px;
  top: 860px;
}

.v-scroll {
  display: flex;
  flex-direction: column;
  justify-content: space-between;
  align-items: center;
  width: 17px;
  padding-bottom: 6px;
  background: #2b2a2c;
  color: #8c8c8c;
}

.v-thumb {
  width: 14px;
  height: 26px;
  margin-top: 603px;
  border-radius: 7px;
  background: #464547;
}

.status {
  display: flex;
  align-items: center;
  height: 17px;
  flex-shrink: 0;
  overflow: hidden;
  background: var(--bar);
  border-top: 1px solid #2a292b;
}

.status input {
  height: 17px;
  background: var(--field);
}

.zoom {
  display: flex;
  margin-right: 5px;
}

.zoom input {
  width: 31px;
  padding: 0;
}

.nav {
  width: 17px;
}

.artboard {
  display: flex;
  margin: 0 5px 0 3px;
}

.artboard input {
  width: 41px;
}

.tool-name {
  flex-shrink: 0;
  width: 200px;
  margin-left: 4px;
  border-left: 1px solid var(--line);
  color: #9a9a9a;
  text-align: center;
}

.play {
  width: 17px;
}

.h-scroll {
  display: flex;
  align-items: center;
  justify-content: space-between;
  flex: 1;
  height: 17px;
  padding: 0 7px;
  background: #2b2a2c;
  color: #8c8c8c;
}

.h-thumb {
  width: 25px;
  height: 14px;
  margin-right: 18px;
  border-radius: 7px;
  background: #464547;
}

.corner {
  width: 17px;
  height: 17px;
}

/* docked columns */
.column {
  flex-shrink: 0;
  width: 40px;
  border-left: 2px solid var(--line);
  background: #323232;
}

.column-top {
  display: flex;
  align-items: center;
  justify-content: flex-end;
  height: 12px;
  padding-right: 7px;
  background: var(--dark);
}

.dock-group {
  display: flex;
  flex-direction: column;
  align-items: center;
  gap: 6px;
  padding: 2px 0 5px;
  border-bottom: 1px solid var(--line);
}

.dock-group button {
  width: 28px;
  height: 22px;
}

.dock-group .active {
  background: #222224;
}

.grip {
  width: 20px;
  height: 5px;
  background: repeating-linear-gradient(90deg, #1f1f20 0 1px, transparent 1px 2px);
}

.gradient-icon {
  width: 17px;
  height: 12px;
  border: 1px solid #c4c4c4;
  background: linear-gradient(90deg, #333, #eee);
}

/* properties */
.props {
  width: 154px;
  overflow: hidden;
}

.prop-tabs {
  display: flex;
  height: 27px;
  background: var(--dark);
  color: #8c8c8c;
}

.prop-tabs button {
  padding: 0 10px;
}

.prop-tabs button + button + button {
  margin-left: 8px;
}

.prop-tabs .on {
  background: #323232;
  color: #f0f0f0;
}

.prop-type {
  height: 33px;
  padding: 8px 10px 0;
  border-bottom: 1px solid var(--line);
  color: #aaa;
  font-size: 10px;
  line-height: 20px;
}

.transform {
  height: 129px;
  padding: 10px 0 0 10px;
  border-bottom: 1px solid var(--line);
}

.transform-grid {
  display: flex;
  gap: 8px;
  margin-top: 7px;
}

.ref-point {
  margin-top: 14px;
}

.coords {
  display: grid;
  grid-template-columns: 16px 54px 32px 54px;
  gap: 6px 4px;
  align-items: center;
  font-size: 10px;
  color: #aaa;
  white-space: nowrap;
}

.coords label {
  text-align: right;
}

.coords input.box {
  width: 54px;
}

.appearance {
  height: 166px;
  padding: 10px 0 0 10px;
  border-bottom: 1px solid var(--line);
}

.look-rows {
  padding: 3px 0 2px;
}

.look-row {
  display: grid;
  grid-template-columns: 17px 40px 70px;
  gap: 12px;
  align-items: center;
  justify-items: start;
  height: 29px;
  font-size: 10px;
  color: #aaa;
}

.chip {
  width: 17px;
  height: 17px;
}

.checker {
  border: 1px solid #aaa;
  background: conic-gradient(#5a5a5a 25%, #333 0 50%, #5a5a5a 0 75%, #333 0) 0 0 / 8px 8px;
}

.fx {
  margin-left: 6px;
  color: #c8c8c8;
  font: italic 15px/24px "Liberation Sans", sans-serif;
}

.quick {
  padding: 14px 0 0 10px;
}

.quick-grid {
  display: grid;
  grid-template-columns: 100px 100px;
  gap: 10px;
  margin-top: 8px;
}

.quick-grid button {
  height: 21px;
  border: 1px solid #555;
  border-radius: 2px;
  color: #d0d0d0;
  font-size: 10px;
  font-weight: 500;
}

.quick-grid .wide {
  grid-column: span 2;
}

.quick-grid .split {
  padding-right: 22px;
}

/* color panel */
.color-panel {
  position: absolute;
  right: 193px;
  top: 10px;
  width: 240px;
  padding-top: 3px;
  border: solid var(--line);
  border-width: 0 1px 1px;
  background: #323132;
  box-shadow: inset 0 3px #1f1f20;
}

.color-tabs {
  display: flex;
  height: 27px;
  background: var(--dark);
  color: #8c8c8c;
}

.color-tabs button {
  padding: 0 9px;
}

.color-tabs .on {
  gap: 4px;
  padding: 0 9px 0 5px;
  background: #363437;
  color: #f0f0f0;
}

.color-tools {
  display: flex;
  align-items: center;
  gap: 7px;
  margin-left: auto;
  padding-right: 6px;
}

.color-tools i {
  width: 1px;
  height: 11px;
  background: #8c8c8c;
}

.color-row {
  display: flex;
  align-items: center;
  gap: 5px;
  padding: 6px 17px 7px 6px;
  color: #b0b0b0;
}

.color-row label {
  margin-left: auto;
}

.color-row input {
  width: 45px;
}

.spectrum {
  height: 24px;
  margin: 0 17px 7px 6px;
  border: 1px solid #181818;
  background:
    linear-gradient(rgba(255, 255, 255, 0.95), rgba(255, 255, 255, 0) 50%, rgba(0, 0, 0, 0) 50%, rgba(0, 0, 0, 0.95)),
    linear-gradient(90deg, #f00, #ff0 17%, #0f0 34%, #0ff 50%, #00f 67%, #f0f 83%, #f00);
}

.panel-foot {
  display: flex;
  justify-content: center;
  height: 8px;
  padding-top: 1px;
  border-top: 1px solid var(--line);
}

/* taskbar */
.taskbar {
  display: flex;
  align-items: center;
  height: 39px;
  flex-shrink: 0;
  background: linear-gradient(90deg, #1a1e1c, #1c211c 50%, #1e1e1e 85%);
}

.task {
  width: 48px;
  height: 39px;
}

.first {
  width: 46px;
}

.running {
  display: flex;
  gap: 1px;
  margin-left: 4px;
}

.open {
  border-bottom: 2px solid #76a9d0;
  border-image: linear-gradient(90deg, transparent 4px, #86b4d8 4px 44px, transparent 44px) 2;
  padding-top: 2px;
}

.current {
  background: #4c4c4c;
  border-image: none;
  border-color: #9cc3e2;
}

.ai {
  width: 22px;
  height: 21px;
  border: 2px solid #c9702e;
  background: #2c0d02;
  color: #e88438;
  font: 12px/17px "Noto Sans", sans-serif;
}

.tray {
  display: flex;
  align-items: center;
  gap: 9px;
  margin-left: auto;
  padding-right: 17px;
}

.ime {
  margin-right: 5px;
  color: #fff;
  font-size: 12px;
}

.clock {
  display: flex;
  flex-direction: column;
  align-items: flex-end;
  width: 20px;
  color: #f0f0f0;
  line-height: 19px;
}

/* overlays */
.annotate {
  position: absolute;
  top: 0;
  right: 0;
  display: flex;
  align-items: center;
  width: 365px;
  height: 41px;
  padding: 0 3px 2px 5px;
  background: #e8e9f4;
  color: #16161e;
}

.annotate button {
  width: 28px;
  height: 28px;
}

.rule {
  width: 1px;
  height: 16px;
  margin: 0 6px;
  background: #aaaab4;
}

.annotate-end {
  display: flex;
  align-items: center;
  gap: 6px;
  height: 16px;
  margin-left: auto;
  padding-left: 17px;
  border-left: 1px solid #aaaab4;
}

.sogou {
  position: absolute;
  top: 92px;
  right: 0;
  display: flex;
  align-items: center;
  gap: 8px;
  width: 84px;
  height: 22px;
  padding-left: 10px;
  background: #fff;
}

.sogou-logo {
  position: absolute;
  left: -24px;
  top: -5px;
}

.zh {
  color: #2f7cb8;
  font-size: 16px;
  font-weight: 700;
}
</style>
